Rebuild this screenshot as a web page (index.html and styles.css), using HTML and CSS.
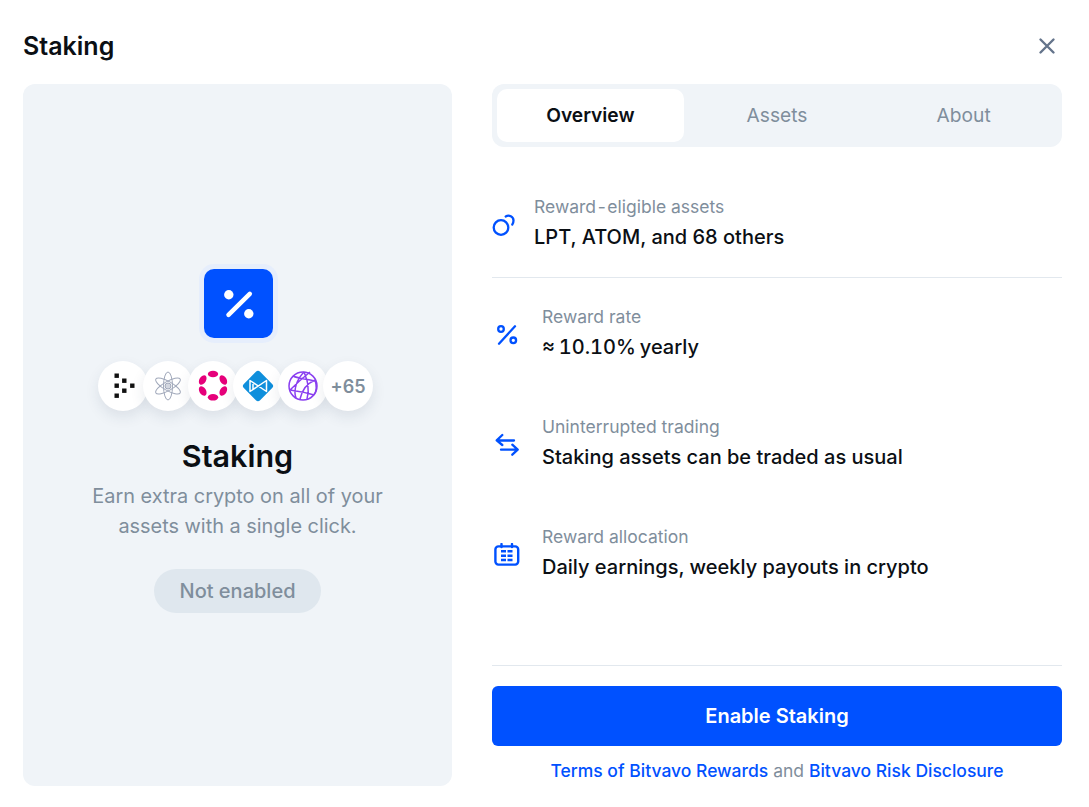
FILE: index.html
```html
<!DOCTYPE html>
<html lang="en">
<head>
<meta charset="utf-8">
<title>Staking</title>
<link rel="stylesheet" href="styles.css">
</head>
<body>
<div class="modal">
  <header class="head">
    <h1 class="title">Staking</h1>
    <button class="close" aria-label="Close">
      <svg width="24" height="24" viewBox="0 0 24 24" fill="none" stroke="#64748b" stroke-width="2.400" stroke-linecap="round"><path d="M5.500 5.500l13 13M18.500 5.500l-13 13"/></svg>
    </button>
  </header>
  <div class="columns">
    <section class="hero">
      <div class="badge">
        <svg width="32" height="32" viewBox="0 0 32 32" fill="#fff"><circle cx="5.800" cy="6.800" r="4.700"/><circle cx="25.800" cy="25.800" r="4.700"/><path d="M26.800 5.800L5.500 26.800" stroke="#fff" stroke-width="4.500" stroke-linecap="round"/></svg>
      </div>
      <div class="coins">
        <span class="coin">
          <svg width="26" height="26" viewBox="0 0 26 26" fill="#111"><rect x="4.500" y=".5" width="4.400" height="4.400"/><rect x="12.100" y="5.500" width="4.400" height="4.400"/><rect x="20.100" y="10.500" width="4.400" height="4.400"/><rect x="4.500" y="10.500" width="4.400" height="4.400"/><rect x="12.100" y="15.500" width="4.400" height="4.400"/><rect x="4.500" y="20.500" width="4.400" height="4.400"/></svg>
        </span>
        <span class="coin">
          <svg width="30" height="30" viewBox="0 0 30 30" fill="none" stroke="#a0a8ba" stroke-width="1"><ellipse cx="15" cy="15" rx="4.500" ry="14"/><ellipse cx="15" cy="15" rx="4.500" ry="14" transform="rotate(60 15 15)"/><ellipse cx="15" cy="15" rx="4.500" ry="14" transform="rotate(-60 15 15)"/><circle cx="15" cy="15" r="3" fill="#d3d7e0"/></svg>
        </span>
        <span class="coin">
          <svg width="32" height="32" viewBox="0 0 32 32" fill="#e6007a"><ellipse cx="16" cy="4" rx="5.200" ry="3.300"/><ellipse cx="16" cy="27.300" rx="5.200" ry="3.300"/><ellipse cx="5.700" cy="10" rx="5.200" ry="3.300" transform="rotate(-60 5.700 10)"/><ellipse cx="26.300" cy="10" rx="5.200" ry="3.300" transform="rotate(60 26.300 10)"/><ellipse cx="5.700" cy="21" rx="5.200" ry="3.300" transform="rotate(60 5.700 21)"/><ellipse cx="26.300" cy="21" rx="5.200" ry="3.300" transform="rotate(-60 26.300 21)"/></svg>
        </span>
        <span class="coin">
          <svg width="32" height="32" viewBox="0 0 32 32"><rect x="4.500" y="4.500" width="23" height="23" rx="3" transform="rotate(45 16 16)" fill="#0f8fdc"/><path d="M8 10.500V21.500L24.500 10.500V21.500zM11 14v5" fill="none" stroke="#fff" stroke-width="1.500" stroke-linejoin="round"/></svg>
        </span>
        <span class="coin">
          <svg width="32" height="32" viewBox="0 0 32 32" fill="none" stroke="#8a3ff0" stroke-width="1.500"><circle cx="16" cy="16" r="14"/><path d="M6 6c6 3 16 3 22 5M3 20c8-8 15-14 20-18M9 28C6 20 10 9 17 2M28 10c2 6 1 12-1 15M3 20c7 1 18 3 24 5M13 29c2-9 8-16 15-19M17 2c3 8 6 15 3 27"/></svg>
        </span>
        <span class="coin more">+65</span>
      </div>
      <h2 class="hero-title">Staking</h2>
      <p class="hero-text">Earn extra crypto on all of your assets with a single click.</p>
      <span class="status">Not enabled</span>
    </section>
    <section class="panel">
      <nav class="tabs">
        <a class="tab active">Overview</a>
        <a class="tab">Assets</a>
        <a class="tab">About</a>
      </nav>
      <ul class="rows">
        <li class="row row-first">
          <svg class="ico" width="24" height="24" viewBox="0 0 24 24" fill="none" stroke="#0051ff" stroke-width="2.300" stroke-linecap="round"><circle cx="9" cy="14.500" r="7.300"/><path d="M13.700 3.500c3.300-2 7.800 0 7.800 4 0 1.500-.4 3-1.200 4"/></svg>
          <div class="row-text"><span class="label">Reward&#8202;-&#8202;eligible assets</span><span class="value">LPT, ATOM, and 68 others</span></div>
        </li>
        <li class="row">
          <svg class="ico" width="26" height="24" viewBox="0 0 26 24" fill="none" stroke="#0051ff" stroke-width="2.300" stroke-linecap="round"><circle cx="7" cy="6" r="2.800"/><circle cx="19.300" cy="17.300" r="2.800"/><path d="M21 3.300L5 20.700"/></svg>
          <div class="row-text"><span class="label">Reward rate</span><span class="value value-num">≈ 10.10% yearly</span></div>
        </li>
        <li class="row">
          <svg class="ico" width="26" height="24" viewBox="0 0 26 24" fill="none" stroke="#0051ff" stroke-width="2.300" stroke-linecap="round" stroke-linejoin="round"><path d="M8.300 2L2.700 7.300 8.300 12M2.700 7.500H20M18.300 11.700l5.400 5-5.400 5M23.700 16.700H7"/></svg>
          <div class="row-text"><span class="label">Uninterrupted trading</span><span class="value">Staking assets can be traded as usual</span></div>
        </li>
        <li class="row">
          <svg class="ico" width="26" height="24" viewBox="0 0 26 24" fill="none" stroke="#0051ff" stroke-width="2.400"><rect x="1.400" y="3.400" width="22.800" height="18.200" rx="3"/><path d="M7.500 1v3M18 1v3" stroke-linecap="round"/><path d="M7 8.300h5M13.500 8.300h5M7 12.700h5M13.500 12.700h5M7 17h5M13.500 17h5" stroke-width="2.600"/></svg>
          <div class="row-text"><span class="label">Reward allocation</span><span class="value">Daily earnings, weekly payouts in crypto</span></div>
        </li>
      </ul>
      <footer class="foot">
        <button class="cta">Enable Staking</button>
        <p class="legal"><a>Terms of Bitvavo Rewards</a> and <a>Bitvavo Risk Disclosure</a></p>
      </footer>
    </section>
  </div>
</div>
</body>
</html>
```
FILE: styles.css
```css
* { box-sizing: border-box; }
html, body { margin: 0; height: 100%; background: #fff; }
body { font-family: Inter, "Liberation Sans", sans-serif; color: #0b0f14; overflow: hidden; }
.modal { width: 1089px; height: 807px; padding: 0 27px 21px 23px; display: flex; flex-direction: column; }
.head { height: 84px; display: flex; align-items: center; justify-content: space-between; padding-top: 21px; padding-bottom: 14px; }
.title { margin: 0; font-size: 25px; line-height: 30px; font-weight: 600; }
.close { width: 24px; height: 24px; padding: 0; border: 0; background: none; margin-right: 3px; }
.close svg { display: block; }
.columns { flex: 1; display: flex; gap: 40px; min-height: 0; }
.hero { width: 429px; background: #f0f4f8; border-radius: 12px; display: flex; flex-direction: column; align-items: center; padding-top: 185px; }
.badge { width: 69px; height: 69px; margin-left: 2px; border-radius: 10px; background: #0051ff; box-shadow: 0 0 0 5px #e6eefc; display: flex; align-items: center; justify-content: center; }
.coins { display: flex; margin-top: 23px; margin-right: 4px; }
.coin { width: 50px; height: 50px; border-radius: 50%; background: #fff; display: flex; align-items: center; justify-content: center; margin-left: -5px; box-shadow: 0 6px 14px rgba(40, 60, 90, .1); }
.coin:first-child { margin-left: 0; }
.more { font-size: 18px; font-weight: 600; color: #7f8e9c; }
.hero-title { margin: 25px 0 0; font-size: 30.500px; line-height: 40px; font-weight: 600; }
.hero-text { margin: 5px 0 0; width: 330px; text-align: center; font-size: 19.900px; line-height: 30px; color: #7f8e9c; }
.status { margin-top: 28px; height: 44px; padding: 0 25.500px; border-radius: 22px; background: #dfe7ee; color: #7f8e9c; font-size: 20px; font-weight: 500; display: flex; align-items: center; }
.panel { flex: 1; display: flex; flex-direction: column; min-width: 0; }
.tabs { height: 63px; padding: 5px; background: #f0f4f8; border-radius: 12px; display: flex; }
.tab { flex: 1; display: flex; align-items: center; justify-content: center; padding-bottom: 2px; font-size: 19.200px; color: #7f8e9c; border-radius: 10px; }
.tab.active { background: #fff; color: #0b0f14; font-weight: 600; }
.rows { list-style: none; margin: 0; padding: 0; flex: 1; display: flex; flex-direction: column; }
.row { height: 110px; display: flex; align-items: center; gap: 22px; padding-left: 2px; padding-top: 4px; }
.row-first { height: 131px; padding-left: 0; gap: 18px; padding-top: 25px; border-bottom: 1px solid #e2e8ee; }
.row-text { display: flex; flex-direction: column; }
.label { font-size: 17.500px; line-height: 24px; color: #7f8e9c; }
.value { font-size: 20px; line-height: 36px; font-weight: 500; }
.value-num { font-feature-settings: "tnum"; word-spacing: -1.500px; }
.ico { flex: none; }
.foot { border-top: 1px solid #e2e8ee; padding-top: 20px; padding-bottom: 2px; }
.cta { display: block; width: 100%; height: 60px; border: 0; border-radius: 6px; background: #0051ff; color: #fff; font: 600 20px Inter, "Liberation Sans", sans-serif; }
.legal { margin: 12px 0 0; text-align: center; font-size: 17.500px; line-height: 26px; color: #7f8e9c; }
.legal a { color: #0051ff; font-weight: 500; }
```
